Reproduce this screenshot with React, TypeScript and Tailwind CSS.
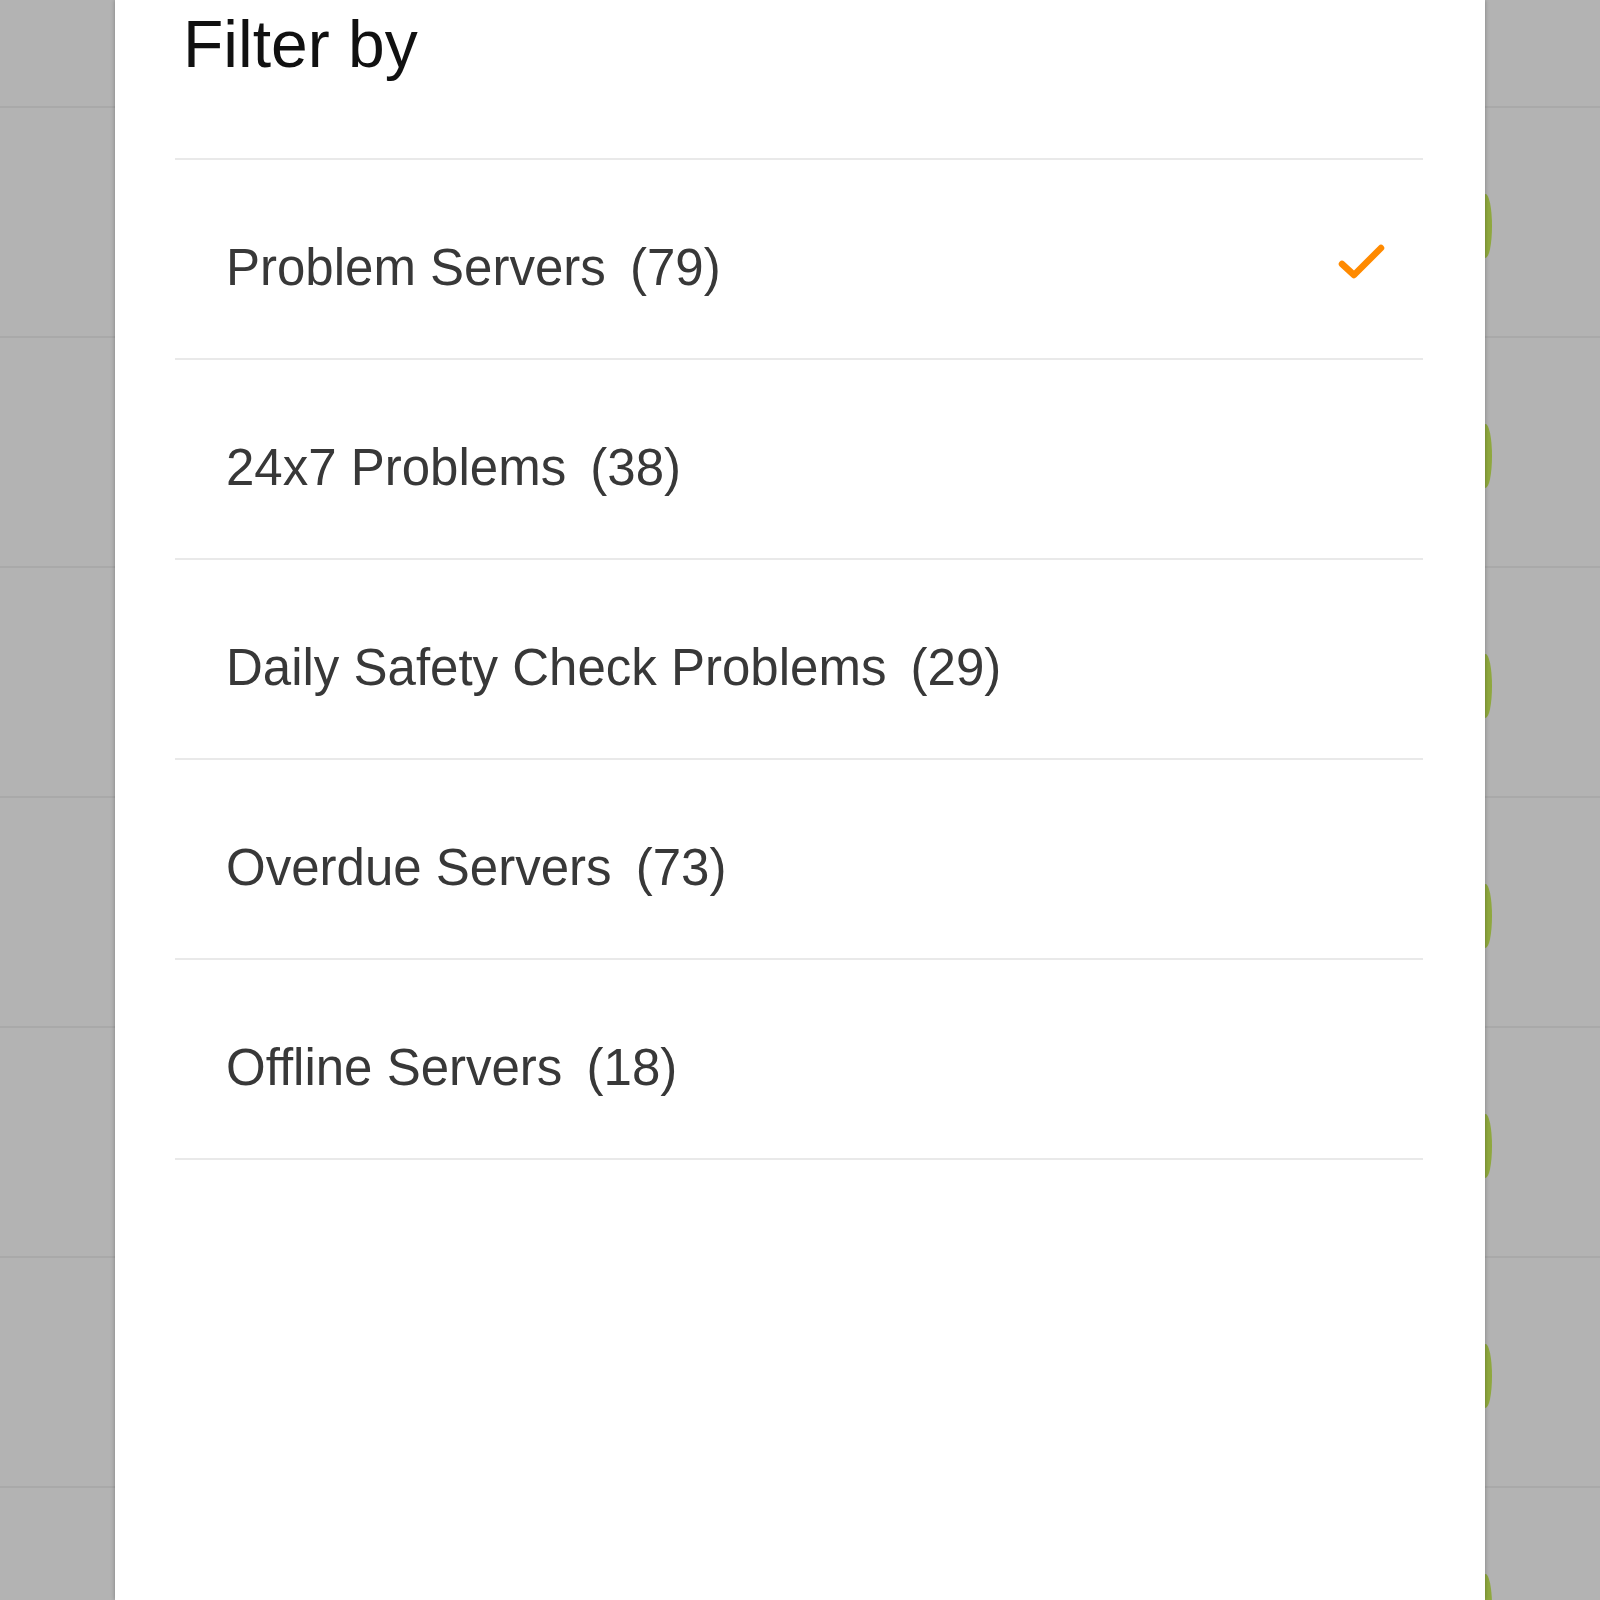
import React from "react";

type Filter = { label: string; count: number; selected?: boolean };

const filters: Filter[] = [
  { label: "Problem Servers", count: 79, selected: true },
  { label: "24x7 Problems", count: 38 },
  { label: "Daily Safety Check Problems", count: 29 },
  { label: "Overdue Servers", count: 73 },
  { label: "Offline Servers", count: 18 },
];

// Rows of the server list sitting behind the sheet; only their edges peek out.
const backdropRows = [0, 1, 2, 3, 4, 5, 6];

function CheckIcon() {
  return (
    <svg width="50" height="40" viewBox="0 0 50 40" fill="none" aria-hidden>
      <path
        d="M5 22 L17 33 L44 6"
        stroke="#ff8a00"
        strokeWidth="6.5"
        strokeLinecap="round"
        strokeLinejoin="round"
      />
    </svg>
  );
}

export default function App() {
  return (
    <div
      className="relative w-[1600px] h-[1600px] overflow-hidden bg-[#b3b3b3]"
      style={{ fontFamily: '"Liberation Sans", Arial, Helvetica, sans-serif' }}
    >
      {/* backdrop list */}
      <div className="flex flex-col pt-[106px]">
        {backdropRows.map((i) => (
          <div
            key={i}
            className="h-[230px] shrink-0 border-t-2 border-[#a9a9a9] flex items-start pt-[86px]"
          >
            <div className="ml-[1479px] w-[13px] h-[64px] rounded-[50%] bg-[#8fa83e]" />
          </div>
        ))}
      </div>

      {/* filter sheet */}
      <div className="absolute inset-y-0 left-[115px] w-[1370px] bg-white shadow-[0_0_4px_rgba(0,0,0,0.3)]">
        <div className="ml-[60px] mr-[62px] flex flex-col">
          <div className="h-[160px] border-b-2 border-[#e9e9e9] pl-[8px] pt-[11px]">
            <h2 className="text-[66px] leading-none text-[#111111] font-normal">
              Filter by
            </h2>
          </div>
          {filters.map((f) => (
            <div
              key={f.label}
              className="h-[200px] border-b-2 border-[#e9e9e9] flex items-center justify-between pt-[16px] pl-[51px] pr-[36px]"
            >
              <span className="text-[51px] leading-none text-[#383838]">
                {f.label} <span className="ml-[10px]">({f.count})</span>
              </span>
              {f.selected && (
                <span className="mb-[10px]">
                  <CheckIcon />
                </span>
              )}
            </div>
          ))}
        </div>
      </div>
    </div>
  );
}
